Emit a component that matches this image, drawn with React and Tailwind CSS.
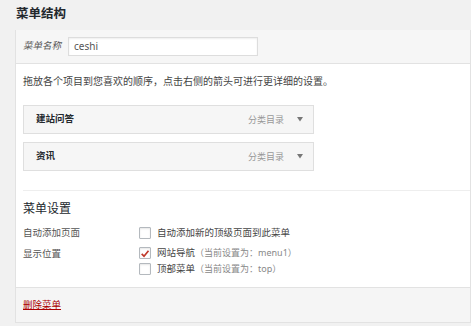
const cjk = "font-['Noto_Sans','Noto_Sans_CJK_SC',sans-serif]";

const Checkbox = ({ checked }) => (
  <span className="w-[12px] h-[12px] shrink-0 border border-[#b4b9be] bg-white rounded-[1px] shadow-[inset_0_1px_2px_rgba(0,0,0,0.1)] flex items-center justify-center">
    {checked && (
      <svg width="11" height="11" viewBox="0 0 12 12">
        <polyline points="2,6.5 4.8,9.2 10.2,2.6" fill="none" stroke="#c0392b" strokeWidth="2" />
      </svg>
    )}
  </span>
);

const MenuItem = ({ title }) => (
  <div className="w-[291px] h-[29px] border border-[#dfdfdf] bg-[#f6f6f6] flex items-center pl-[12px] pr-[10px]">
    <span className="text-[9.5px] font-bold text-[#23282d]">{title}</span>
    <span className="ml-auto text-[9px] text-[#999]">分类目录</span>
    <svg className="ml-[13px]" width="6" height="5" viewBox="0 0 6 5">
      <polygon points="0,0 6,0 3,4.5" fill="#777" />
    </svg>
  </div>
);

export default function App() {
  return (
    <div className={`w-[474px] h-[326px] flex bg-white overflow-hidden ${cjk}`}>
      <div className="w-[471px] h-full bg-[#f1f1f1] flex flex-col">
        {/* Header */}
        <div className="h-[30px] shrink-0 flex items-center pl-[16px] pb-[2px]">
          <h2 className="text-[12.5px] font-bold text-[#23282d]">菜单结构</h2>
        </div>

        {/* Box */}
        <div className="ml-[15px] h-[293px] border-l border-r border-b border-[#e2e2e2] bg-white flex flex-col">
          <div className="h-[34px] shrink-0 bg-[#f6f6f6] border-b border-[#e2e2e2] flex items-center pl-[7px]">
            <span className="italic text-[9.5px] text-[#555] w-[45px]">菜单名称</span>
            <div className="w-[190px] h-[19px] border border-[#ddd] bg-white flex items-center pl-[5px] text-[10px] text-[#555] shadow-[inset_0_1px_2px_rgba(0,0,0,0.07)]">
              ceshi
            </div>
          </div>

          <div className="flex-1 flex flex-col pl-[7px]">
            <p className="mt-[11px] text-[10px] text-[#444] leading-[12px]">
              拖放各个项目到您喜欢的顺序，点击右侧的箭头可进行更详细的设置。
            </p>
            <div className="mt-[18px] flex flex-col gap-[8px]">
              <MenuItem title="建站问答" />
              <MenuItem title="资讯" />
            </div>

            <div className="mt-[19px] border-t border-[#eee]" />

            <h3 className="mt-[10px] text-[12px] text-[#23282d] leading-[16px]">菜单设置</h3>

            <div className="mt-[10px] flex text-[9.5px] text-[#555] leading-[12px]">
              <span className="w-[116px]">自动添加页面</span>
              <div className="flex items-center gap-[6px]">
                <Checkbox />
                <span className="text-[#444]">自动添加新的顶级页面到此菜单</span>
              </div>
            </div>

            <div className="mt-[8px] flex text-[9.5px] text-[#555] leading-[12px]">
              <span className="w-[116px] pt-[1px]">显示位置</span>
              <div className="flex flex-col gap-[4px]">
                <div className="flex items-center gap-[6px]">
                  <Checkbox checked />
                  <span className="text-[#444]">
                    网站导航<span className="text-[#888] text-[9px]">（当前设置为：menu1）</span>
                  </span>
                </div>
                <div className="flex items-center gap-[6px]">
                  <Checkbox />
                  <span className="text-[#444]">
                    顶部菜单<span className="text-[#888] text-[9px]">（当前设置为：top）</span>
                  </span>
                </div>
              </div>
            </div>
          </div>

          {/* Footer */}
          <div className="h-[35px] shrink-0 bg-[#f5f5f5] border-t border-[#e2e2e2] flex items-center pl-[7px]">
            <a href="#" className="text-[9.5px] text-[#a00] underline">删除菜单</a>
          </div>
        </div>
      </div>
    </div>
  );
}
